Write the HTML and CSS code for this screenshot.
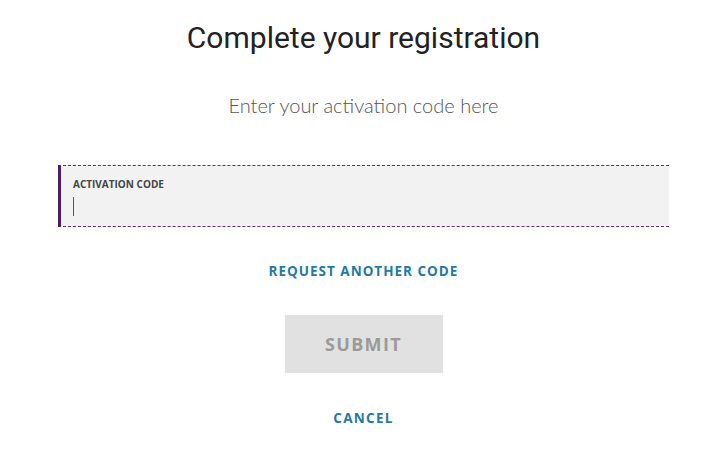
FILE: index.html
```html
<!DOCTYPE html>
<html lang="en">
<head>
<meta charset="utf-8">
<title>Complete your registration</title>
<link rel="stylesheet" href="styles.css">
</head>
<body>
<main class="page">
  <h1 class="title">Complete your registration</h1>
  <p class="subtitle">Enter your activation code here</p>
  <div class="field">
    <label class="field-label" for="code">ACTIVATION CODE</label>
    <div class="field-input"><span class="caret"></span></div>
  </div>
  <a class="link request" href="#">REQUEST ANOTHER CODE</a>
  <button class="submit" type="button">SUBMIT</button>
  <a class="link cancel" href="#">CANCEL</a>
</main>
</body>
</html>
```
FILE: styles.css
```css
html, body {
  margin: 0;
  padding: 0;
  background: #ffffff;
}
.page {
  display: flex;
  flex-direction: column;
  align-items: center;
  padding-top: 20px;
}
.title {
  margin: 0;
  font-family: Roboto, "Liberation Sans", sans-serif;
  font-weight: 400;
  font-size: 30px;
  line-height: 36px;
  color: #222222;
}
.subtitle {
  margin: 37px 0 0;
  font-family: Lato, "Open Sans", sans-serif;
  font-weight: 300;
  font-size: 20px;
  line-height: 24px;
  color: #555555;
}
.field {
  margin-top: 48px;
  width: 611px;
  height: 62px;
  box-sizing: border-box;
  background: #f2f2f2;
  border-top: 1px dashed #5a2d7e;
  border-bottom: 1px dashed #5a2d7e;
  border-left: 3px solid #4b1d6e;
  padding: 12px 0 0 12px;
  display: flex;
  flex-direction: column;
}
.field-label {
  font-family: "Open Sans", "Liberation Sans", sans-serif;
  font-weight: 700;
  font-size: 10px;
  line-height: 12px;
  color: #444444;
}
.field-input {
  margin-top: 7px;
  height: 20px;
}
.caret {
  display: block;
  width: 1px;
  height: 19px;
  background: #555555;
}
.link {
  font-family: "Open Sans", "Liberation Sans", sans-serif;
  font-weight: 700;
  color: #1f7aa6;
  text-decoration: none;
  letter-spacing: 1px;
}
.request {
  margin-top: 36px;
  font-size: 13.5px;
  line-height: 16px;
}
.submit {
  margin-top: 36px;
  width: 158px;
  height: 58px;
  border: none;
  background: #e1e1e1;
  color: #9a9a9a;
  font-family: "Open Sans", "Liberation Sans", sans-serif;
  font-weight: 700;
  font-size: 18px;
  letter-spacing: 1.3px;
  padding: 0;
}
.cancel {
  margin-top: 37px;
  font-size: 13.5px;
  line-height: 16px;
  letter-spacing: 1.3px;
}
```
